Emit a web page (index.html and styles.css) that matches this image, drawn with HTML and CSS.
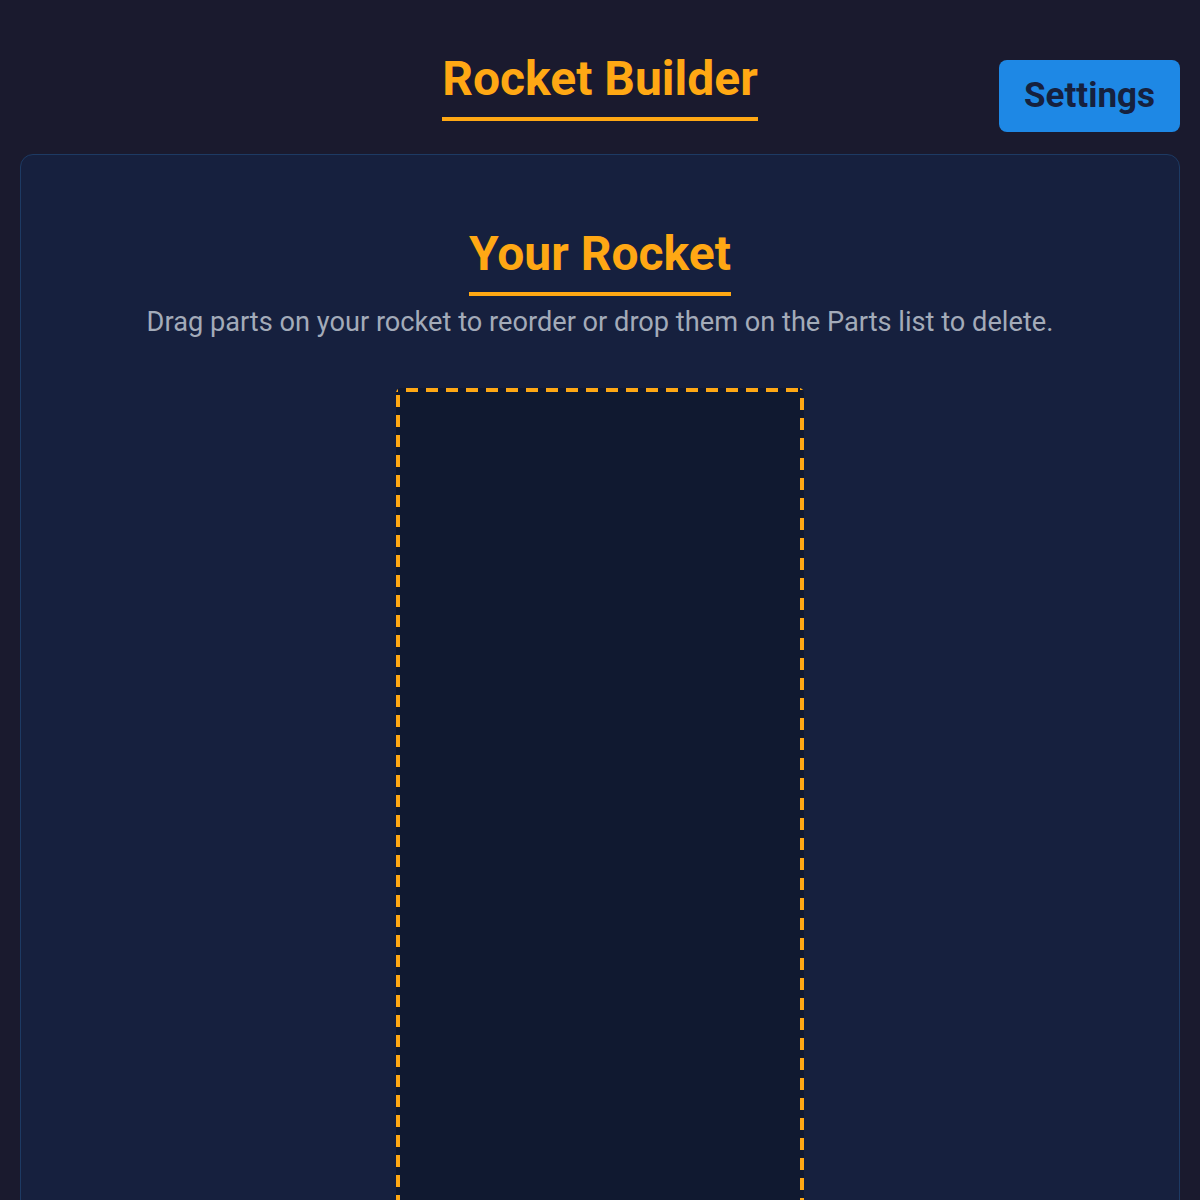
FILE: index.html
```html
<!DOCTYPE html>
<html lang="en">
<head>
<meta charset="utf-8">
<title>Rocket Builder</title>
<link rel="stylesheet" href="styles.css">
</head>
<body>
<div class="app">
  <header class="app-header">
    <div class="spacer"></div>
    <h1 class="app-title">Rocket Builder</h1>
    <button class="settings-btn" type="button">Settings</button>
  </header>
  <main class="builder-card">
    <h2 class="section-title">Your Rocket</h2>
    <p class="hint">Drag parts on your rocket to reorder or drop them on the Parts list to delete.</p>
    <div class="rocket-dropzone"></div>
  </main>
</div>
</body>
</html>
```

FILE: styles.css
```css
* {
  box-sizing: border-box;
}

html, body {
  margin: 0;
  height: 100%;
}

body {
  background: #1a1a2e;
  font-family: Roboto, "Liberation Sans", Arial, sans-serif;
  color: #e0e6f0;
  overflow: hidden;
}

.app {
  padding: 0 20px;
}

.app-header {
  display: grid;
  grid-template-columns: 1fr auto 1fr;
  align-items: start;
  padding-top: 51px;
  height: 154px;
}

.app-title {
  grid-column: 2;
  margin: 0;
  font-size: 48px;
  line-height: 56px;
  font-weight: 700;
  color: #ffa814;
  padding-bottom: 10px;
  border-bottom: 4px solid #ffa814;
}

.settings-btn {
  grid-column: 3;
  justify-self: end;
  margin-top: 9px;
  border: none;
  border-radius: 8px;
  background: #1e88e5;
  color: #16213e;
  font-family: inherit;
  font-size: 35px;
  font-weight: 700;
  line-height: 40px;
  padding: 16px 25px;
  cursor: pointer;
}

.builder-card {
  display: flex;
  flex-direction: column;
  align-items: center;
  background: #16203e;
  border: 1px solid #1d3a63;
  border-radius: 13px;
  padding-top: 71px;
  min-height: 1100px;
}

.section-title {
  margin: 0;
  font-size: 48px;
  line-height: 56px;
  font-weight: 700;
  color: #ffa814;
  padding-bottom: 10px;
  border-bottom: 4px solid #ffa814;
}

.hint {
  margin: 10px 0 0;
  font-size: 27.2px;
  line-height: 32px;
  color: #a3abb9;
}

.rocket-dropzone {
  margin-top: 50px;
  width: 408px;
  height: 900px;
  border-radius: 5px;
  background-color: #101930;
  background-image:
    linear-gradient(90deg, #ffa814 12px, transparent 12px),
    linear-gradient(90deg, #ffa814 12px, transparent 12px),
    linear-gradient(180deg, #ffa814 12px, transparent 12px),
    linear-gradient(180deg, #ffa814 12px, transparent 12px);
  background-size: 20px 4px, 20px 4px, 4px 20px, 4px 20px;
  background-repeat: repeat-x, repeat-x, repeat-y, repeat-y;
  background-position: 10px 0, 10px 100%, 0 7px, 100% 10px;
}
```
